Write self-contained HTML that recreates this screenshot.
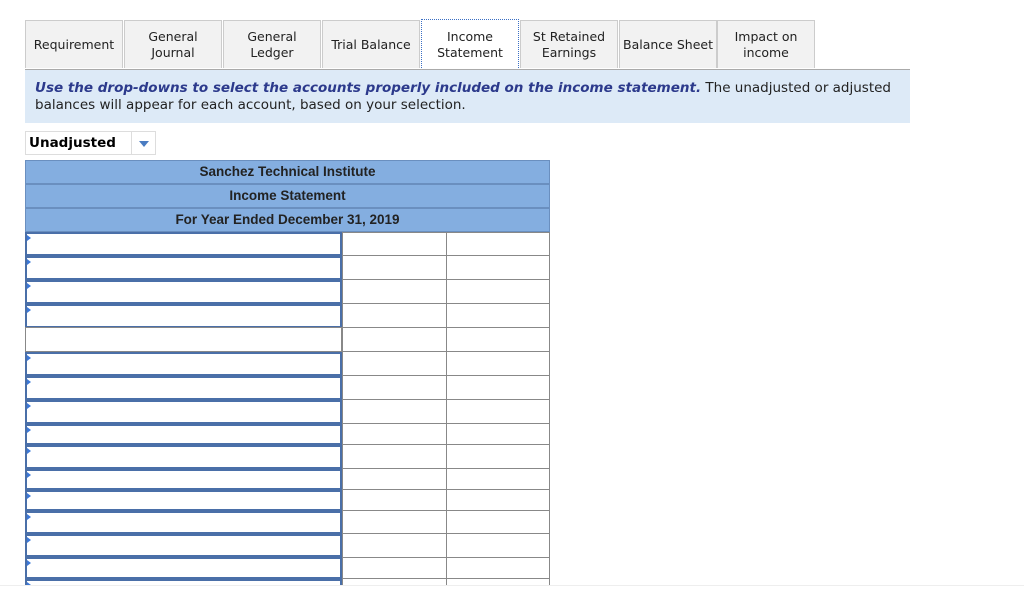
<!DOCTYPE html>
<html><head><meta charset="utf-8"><style>
body{margin:0;width:1024px;height:597px;background:#fff;position:relative;overflow:hidden;font-family:"DejaVu Sans","Liberation Sans",sans-serif;}
.tab{position:absolute;top:20px;height:48px;width:98px;background:#f2f2f2;border:1px solid #ccc;border-bottom:none;box-sizing:border-box;display:flex;align-items:center;justify-content:center;text-align:center;font-size:12.5px;line-height:16px;color:#222;}
.tab.act{background:#fff;border:1px dotted #3a6fc4;height:51px;}
.info{position:absolute;left:25px;top:69px;width:885px;height:54px;background:#ddeaf7;border-top:1px solid #aaa;box-sizing:border-box;padding:10px 10px;font-size:13.5px;line-height:17px;color:#222;}
.info b{color:#2c3a8c;font-style:italic;}
.dd{position:absolute;left:25px;top:131px;width:131px;height:24px;border:1px solid #ddd;box-sizing:border-box;font-size:13.5px;font-weight:bold;line-height:22px;padding-left:3px;}
.dd:after{content:"";position:absolute;left:105px;top:0;width:1px;height:22px;background:#ddd;}
.tri{position:absolute;left:113px;top:9px;border-left:5px solid transparent;border-right:5px solid transparent;border-top:6px solid #4a7cc2;}
.hdr{position:absolute;left:25px;width:525px;height:24px;background:#84aee0;border:1px solid #6a8fbf;box-sizing:border-box;text-align:center;font-family:"Liberation Sans",sans-serif;font-weight:bold;font-size:13.5px;line-height:22px;color:#222;}
.c1{position:absolute;left:25px;width:317px;box-sizing:border-box;border:2px solid #4a6fa8;background:#fff;}
.c1:before{content:"";position:absolute;left:0;top:1px;border-top:3px solid transparent;border-bottom:3px solid transparent;border-left:4px solid #3c78d8;}
.c1.plain{border:1px solid #888;}
.c1.plain:before{display:none}
.c{position:absolute;box-sizing:border-box;border:1px solid #888;}
</style></head><body>
<div class="tab" style="left:25px">Requirement</div>
<div class="tab" style="left:124px">General<br>Journal</div>
<div class="tab" style="left:223px">General<br>Ledger</div>
<div class="tab" style="left:322px">Trial Balance</div>
<div class="tab act" style="left:421px;top:19px">Income<br>Statement</div>
<div class="tab" style="left:520px">St Retained<br>Earnings</div>
<div class="tab" style="left:619px">Balance Sheet</div>
<div class="tab" style="left:717px;width:98px">Impact on<br>income</div>
<div class="info"><b>Use the drop-downs to select the accounts properly included on the income statement.</b> The unadjusted or adjusted balances will appear for each account, based on your selection.</div>
<div class="dd">Unadjusted<span class="tri"></span></div>
<div class="hdr" style="top:160px">Sanchez Technical Institute</div>
<div class="hdr" style="top:184px">Income Statement</div>
<div class="hdr" style="top:208px">For Year Ended December 31, 2019</div>

<div class="c1" style="top:232px;height:24px"></div><div class="c" style="left:342px;top:232px;width:105px;height:24px"></div><div class="c" style="left:446px;top:232px;width:104px;height:24px"></div>
<div class="c1" style="top:256px;height:24px"></div><div class="c" style="left:342px;top:255px;width:105px;height:25px"></div><div class="c" style="left:446px;top:255px;width:104px;height:25px"></div>
<div class="c1" style="top:280px;height:24px"></div><div class="c" style="left:342px;top:279px;width:105px;height:25px"></div><div class="c" style="left:446px;top:279px;width:104px;height:25px"></div>
<div class="c1" style="top:304px;height:24px"></div><div class="c" style="left:342px;top:303px;width:105px;height:25px"></div><div class="c" style="left:446px;top:303px;width:104px;height:25px"></div>
<div class="c1 plain" style="top:327px;height:25px"></div><div class="c" style="left:342px;top:327px;width:105px;height:25px"></div><div class="c" style="left:446px;top:327px;width:104px;height:25px"></div>
<div class="c1" style="top:352px;height:24px"></div><div class="c" style="left:342px;top:351px;width:105px;height:25px"></div><div class="c" style="left:446px;top:351px;width:104px;height:25px"></div>
<div class="c1" style="top:376px;height:24px"></div><div class="c" style="left:342px;top:375px;width:105px;height:25px"></div><div class="c" style="left:446px;top:375px;width:104px;height:25px"></div>
<div class="c1" style="top:400px;height:24px"></div><div class="c" style="left:342px;top:399px;width:105px;height:25px"></div><div class="c" style="left:446px;top:399px;width:104px;height:25px"></div>
<div class="c1" style="top:424px;height:21px"></div><div class="c" style="left:342px;top:423px;width:105px;height:22px"></div><div class="c" style="left:446px;top:423px;width:104px;height:22px"></div>
<div class="c1" style="top:445px;height:24px"></div><div class="c" style="left:342px;top:444px;width:105px;height:25px"></div><div class="c" style="left:446px;top:444px;width:104px;height:25px"></div>
<div class="c1" style="top:469px;height:21px"></div><div class="c" style="left:342px;top:468px;width:105px;height:22px"></div><div class="c" style="left:446px;top:468px;width:104px;height:22px"></div>
<div class="c1" style="top:490px;height:21px"></div><div class="c" style="left:342px;top:489px;width:105px;height:22px"></div><div class="c" style="left:446px;top:489px;width:104px;height:22px"></div>
<div class="c1" style="top:511px;height:23px"></div><div class="c" style="left:342px;top:510px;width:105px;height:24px"></div><div class="c" style="left:446px;top:510px;width:104px;height:24px"></div>
<div class="c1" style="top:534px;height:23px"></div><div class="c" style="left:342px;top:533px;width:105px;height:25px"></div><div class="c" style="left:446px;top:533px;width:104px;height:25px"></div>
<div class="c1" style="top:557px;height:22px"></div><div class="c" style="left:342px;top:557px;width:105px;height:22px"></div><div class="c" style="left:446px;top:557px;width:104px;height:22px"></div>
<div class="c1" style="top:579px;height:12px;border-bottom:none"></div><div class="c" style="left:342px;top:578px;width:105px;height:8px;border-bottom:none"></div><div class="c" style="left:446px;top:578px;width:104px;height:8px;border-bottom:none"></div>
<div style="position:absolute;left:0;top:585px;width:1024px;height:12px;background:#fff;border-top:1px solid #eee"></div>
</body></html>
